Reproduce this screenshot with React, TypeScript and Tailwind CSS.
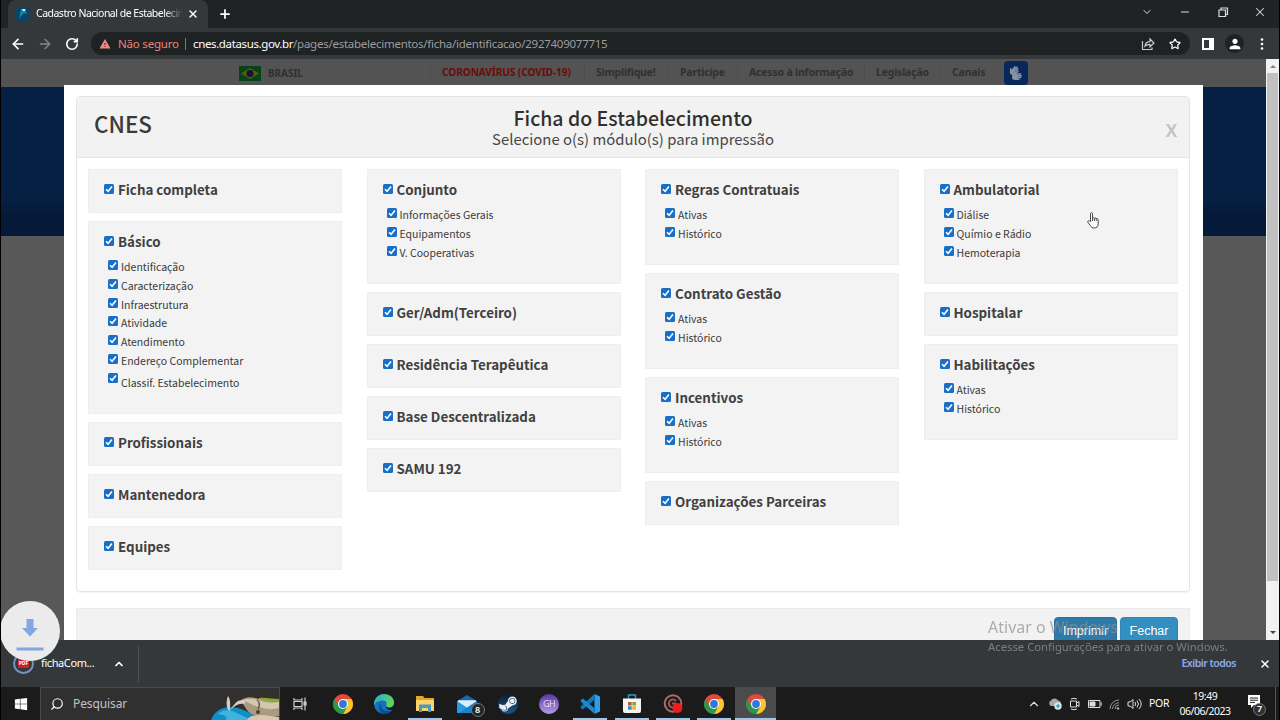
import { useState } from 'react';
import type { ReactNode } from 'react';
import { FaWindows, FaSteamSymbol, FaSignLanguage } from 'react-icons/fa';
import { MdWarning, MdPerson } from 'react-icons/md';
import {
  ArrowLeft,
  ArrowRight,
  ChevronDown,
  ChevronUp,
  Minus,
  Plus,
  RotateCw,
  Search,
  Star,
  X,
} from 'lucide-react';

type Module = {
  title: string;
  items?: string[];
  height: string;
};

const columns: Module[][] = [
  [
    { title: 'Ficha completa', height: 'h-11' },
    {
      title: 'Básico',
      height: 'h-[193px]',
      items: [
        'Identificação',
        'Caracterização',
        'Infraestrutura',
        'Atividade',
        'Atendimento',
        'Endereço Complementar',
        'Classif. Estabelecimento',
      ],
    },
    { title: 'Profissionais', height: 'h-11' },
    { title: 'Mantenedora', height: 'h-11' },
    { title: 'Equipes', height: 'h-11' },
  ],
  [
    {
      title: 'Conjunto',
      height: 'h-[115px]',
      items: ['Informações Gerais', 'Equipamentos', 'V. Cooperativas'],
    },
    { title: 'Ger/Adm(Terceiro)', height: 'h-11' },
    { title: 'Residência Terapêutica', height: 'h-11' },
    { title: 'Base Descentralizada', height: 'h-11' },
    { title: 'SAMU 192', height: 'h-11' },
  ],
  [
    { title: 'Regras Contratuais', height: 'h-24', items: ['Ativas', 'Histórico'] },
    { title: 'Contrato Gestão', height: 'h-24', items: ['Ativas', 'Histórico'] },
    { title: 'Incentivos', height: 'h-24', items: ['Ativas', 'Histórico'] },
    { title: 'Organizações Parceiras', height: 'h-11' },
  ],
  [
    {
      title: 'Ambulatorial',
      height: 'h-[115px]',
      items: ['Diálise', 'Químio e Rádio', 'Hemoterapia'],
    },
    { title: 'Hospitalar', height: 'h-11' },
    { title: 'Habilitações', height: 'h-24', items: ['Ativas', 'Histórico'] },
  ],
];

const Checkbox = () => {
  const [checked, setChecked] = useState(true);

  return (
    <button
      type="button"
      onClick={() => setChecked(!checked)}
      className="flex h-2.5 w-2.5 shrink-0 items-center justify-center rounded-[1.5px] bg-[#176fc8]"
    >
      {checked && (
        <svg viewBox="0 0 10 10" className="h-2.5 w-2.5" fill="none" stroke="#fff" strokeWidth="1.6">
          <path d="M2 5.2 4.1 7.3 8 2.6" />
        </svg>
      )}
    </button>
  );
};

const ModuleCard = ({ title, items, height }: Module) => (
  <div className={`${height} shrink-0 border border-[#eeeeee] bg-[#f3f3f3] pl-[15px] pt-[10px]`}>
    <div className="flex h-[18px] items-center gap-1">
      <Checkbox />
      <span className="mt-0.5 whitespace-nowrap text-[13.35px] font-bold leading-[18px] text-[#404040]">
        {title}
      </span>
    </div>
    {items && (
      <ul className="mt-[6px] pl-1">
        {items.map((item) => (
          <li key={item} className="flex h-[18.8px] items-start gap-[3px] pt-[4px]">
            <Checkbox />
            <span
              className={`whitespace-nowrap text-[10.5px] leading-4 text-[#3a3a3a] ${
                item.startsWith('Classif') ? 'pt-0.5' : '-mt-px'
              }`}
            >
              {item}
            </span>
          </li>
        ))}
      </ul>
    )}
  </div>
);

const TabBar = () => (
  <div className="flex h-7 items-end bg-[#202324] text-white">
    <div className="ml-[7px] flex h-7 w-[200px] items-center rounded-t-lg bg-[#35383b] pl-2">
      <svg viewBox="0 0 14 14" className="h-3.5 w-3.5 shrink-0">
        <rect width="14" height="14" rx="2" fill="#0a4563" />
        <path d="M5 2h5v3l1 2-3-1-3 3-2 3 1-5z" fill="#1387ad" />
        <path d="M6 2h3v2H7z" fill="#d8eef2" />
      </svg>
      <span className="ml-1.5 w-[147px] overflow-hidden whitespace-nowrap text-[10.5px] tracking-[-0.5px] [mask-image:linear-gradient(to_right,#000_87%,transparent)]">
        Cadastro Nacional de Estabelecim
      </span>
      <X className="ml-1 h-3 w-3" strokeWidth={2.8} />
    </div>
    <Plus className="mb-[7px] ml-[10px] h-3.5 w-3.5" strokeWidth={3} />
    <div className="mb-[9px] ml-auto mr-3 flex items-center gap-[26px] text-[#ddd]">
      <ChevronDown className="h-3 w-3" strokeWidth={2} />
      <Minus className="h-3 w-3" strokeWidth={2} />
      <svg viewBox="0 0 12 12" className="h-3 w-3" fill="none" stroke="#ddd" strokeWidth="1.2">
        <path d="M2 4h6.500v6.500H2zM4 4V2h6.500v6.500h-2" />
      </svg>
      <X className="-ml-0.5 h-3.5 w-3.5" strokeWidth={1.8} />
    </div>
  </div>
);

const Toolbar = () => (
  <div className="flex h-[31px] items-center bg-[#35383b] pl-[9px] pr-[9px] text-white">
    <ArrowLeft className="h-4 w-4" strokeWidth={2.4} />
    <ArrowRight className="ml-[11px] h-4 w-4 text-[#85888a]" strokeWidth={2} />
    <RotateCw className="ml-3 h-3.5 w-3.5" strokeWidth={2.8} />
    <div className="ml-3 flex h-[23px] w-[1099px] items-center rounded-full bg-[#1f2223] pl-2 pr-2">
      <MdWarning className="h-3 w-3 text-[#f08a80]" />
      <span className="ml-[7px] w-[60px] whitespace-nowrap text-[11.500px] tracking-[-0.2px] text-[#ee8279]">
        Não seguro
      </span>
      <span className="ml-[7px] h-3 w-px bg-[#777]" />
      <span className="ml-[7px] whitespace-nowrap text-[11.500px] tracking-[-0.26px] text-[#9a9d9f]">
        <span className="tracking-[-0.37px] text-white">cnes.datasus.gov.br</span>
        /pages/estabelecimentos/ficha/identificacao/2927409077715
      </span>
      <svg
        viewBox="0 0 14 14"
        className="ml-auto h-3.5 w-3.5"
        fill="none"
        stroke="#c8cacb"
        strokeWidth="1.2"
      >
        <path d="M1.500 4v8.500h9.500v-2" />
        <path d="M4 9c.4-3 2.200-4.300 5-4.400V2l4 4-4 3.800V7.300C7 7.300 5.300 7.700 4 9z" />
      </svg>
      <Star className="ml-3.5 mr-px h-3 w-3" strokeWidth={2.4} />
    </div>
    <svg viewBox="0 0 12 12" className="ml-[12px] h-3 w-3">
      <path d="M0 0h12v12H0z" fill="#fff" />
      <path d="M2 2h5v8H2z" fill="#35383b" />
    </svg>
    <div className="ml-[11px] flex h-[19px] w-[19px] items-center justify-center rounded-full bg-[#1f2223]">
      <MdPerson className="h-4 w-4" />
    </div>
    <svg viewBox="0 0 4 14" className="ml-auto mr-[6px] h-3.5 w-1" fill="#fff">
      <circle cx="2" cy="2.500" r="1.300" />
      <circle cx="2" cy="7" r="1.300" />
      <circle cx="2" cy="11.500" r="1.300" />
    </svg>
  </div>
);

const GovLink = ({ className, children }: { className: string; children: ReactNode }) => (
  <div className="flex items-center">
    <span className="mr-[11px] h-4 w-px bg-[#4d4d4d]" />
    <span className={`mr-3 whitespace-nowrap ${className}`}>{children}</span>
  </div>
);

const SiteBackground = () => (
  <div className="h-full w-[1265px] bg-[#585858]">
    <div className="flex h-[28px] items-center bg-[#535353] pl-[238px] text-[10.500px] font-bold tracking-[-0.2px] text-[#303030]">
      <svg viewBox="0 0 22 15" className="h-[15px] w-[22px]">
        <path d="M0 0h22v15H0z" fill="#07421a" />
        <path d="M11 2 20 7.500 11 13 2 7.500z" fill="#5d5a0a" />
        <circle cx="11" cy="7.500" r="3.500" fill="#101638" />
      </svg>
      <span className="ml-[7px] w-[162px] text-[10px] tracking-[-0.05px]">BRASIL</span>
      <GovLink className="w-[130px] text-[10.200px] tracking-[-0.12px] text-[#6c0b0b]">
        CORONAVÍRUS (COVID-19)
      </GovLink>
      <GovLink className="w-[60px]">Simplifique!</GovLink>
      <GovLink className="w-[45px]">Participe</GovLink>
      <GovLink className="w-[103px]">Acesso à informação</GovLink>
      <GovLink className="w-[52px]">Legislação</GovLink>
      <GovLink className="w-[40px]">Canais</GovLink>
      <div className="flex h-6 w-6 items-center justify-center rounded bg-[#08275a]">
        <FaSignLanguage className="h-3.5 w-3.5 -scale-x-100 text-[#8794a5]" />
      </div>
    </div>
    <div className="h-[149px] bg-gradient-to-b from-[#062044] from-75% to-[#051a38] to-85%" />
  </div>
);

const PrintModal = () => (
  <div className="absolute left-[63px] top-[26px] h-[555px] w-[1139px] overflow-hidden bg-white px-3 pr-[13px] pt-[11px] font-['Noto_Sans_CJK_JP','Noto_Sans',sans-serif]">
    <div className="h-[496px] rounded-sm border border-[#e4e4e4] shadow-[0_1px_1px_rgba(0,0,0,0.05)]">
      <div className="flex h-[61px] border-b border-[#e6e6e6] bg-[#f2f2f2]">
        <h1 className="w-[57px] pl-[17px] pt-[12px] text-[22.400px] font-medium leading-[28px] text-[#3a3a3a]">
          CNES
        </h1>
        <div className="flex-1 pt-[9px] text-center">
          <h2 className="text-[19.500px] font-medium leading-[23px] text-[#2f2f2f]">
            Ficha do Estabelecimento
          </h2>
          <p className="pt-px text-[14.900px] leading-[18px] text-[#484848]">
            Selecione o(s) módulo(s) para impressão
          </p>
        </div>
        <button className="w-[57px] pr-3 pt-2 text-right font-['Open_Sans',sans-serif] text-[17px] font-bold text-[#c4c4c4]">
          X
        </button>
      </div>
      <div className="flex gap-[24.500px] px-[11px] pt-[11px]">
        {columns.map((modules) => (
          <div key={modules[0].title} className="flex w-[254px] shrink-0 flex-col gap-2">
            {modules.map((module) => (
              <ModuleCard key={module.title} {...module} />
            ))}
          </div>
        ))}
      </div>
    </div>
    <div className="mt-4 flex h-10 justify-end gap-[3px] border border-[#ebebeb] bg-[#f2f2f2] pr-[11px] pt-2 font-['Liberation_Sans',sans-serif] text-[12.500px] text-white">
      <button className="h-7 w-[63px] rounded-sm border border-[#2a6f99] bg-[#2e7aa8]">
        Imprimir
      </button>
      <button className="h-7 w-[58px] rounded-sm border border-[#2e86b5] bg-[#338fbf]">
        Fechar
      </button>
    </div>
  </div>
);

const Scrollbar = () => (
  <div className="absolute right-0 top-0 flex h-full w-[13px] flex-col items-center bg-[#f1f1f1]">
    <svg viewBox="0 0 13 14" className="h-3.5 w-[13px]">
      <path d="M4 9h6L7 6z" fill="#808080" />
    </svg>
    <div className="h-[508px] w-[11px] bg-[#c1c1c1]" />
    <svg viewBox="0 0 13 14" className="mt-auto h-3.5 w-[13px]">
      <path d="M4 5h6L7 8z" fill="#404040" />
    </svg>
  </div>
);

const HandCursor = () => (
  <svg
    viewBox="0 0 12 17"
    className="absolute left-[1086px] top-[153px] h-[17px] w-3"
    fill="#fff"
    stroke="#333"
    strokeWidth="0.9"
    strokeLinejoin="round"
  >
    <path d="M3.500 9.500V2c0-2 2-2 2 0v4.500c0-1.200 1.900-1.200 1.900.2 0-1 1.900-1 1.900.4 0-1 1.900-.8 1.900.6v4.300c0 2.500-1.700 4-3.900 4-2 0-3-.8-4-2.500L.9 10.300c-.7-1.200.7-2 1.500-1.200z" />
    <path d="M5.500 6.500V9M7.400 6.700V9M9.300 7.200V9" fill="none" />
  </svg>
);

const DownloadShelf = () => (
  <div className="flex h-[47px] items-center bg-[#35383b] text-white">
    <div className="flex h-9 w-[138px] items-center border-r border-[#505356] pl-3">
      <div className="flex h-[21px] w-[21px] items-center justify-center rounded-full border-2 border-[#7197bd]">
        <span className="bg-[#d0202d] px-px text-[5px] font-bold leading-[9px]">PDF</span>
      </div>
      <span className="ml-[7px] w-[54px] whitespace-nowrap text-[11px] tracking-[-0.4px]">
        fichaCom...
      </span>
      <ChevronUp className="ml-[18px] h-3 w-3" strokeWidth={3.5} />
    </div>
    <span className="ml-auto text-[10.5px] font-semibold tracking-[-0.5px] text-[#8ea9ee]">
      Exibir todos
    </span>
    <X className="ml-[23px] mr-2 h-3 w-3" strokeWidth={3} />
  </div>
);

const DownloadBubble = () => (
  <div className="absolute -left-px top-[601px] flex h-[60px] w-[60px] flex-col items-center rounded-full bg-[#ebebeb]">
    <svg viewBox="0 0 30 34" className="mt-[18px] h-[34px] w-[30px]" fill="#84a6e4">
      <path d="M11.500 0h7v9h4.500L15 17.500 7 9h4.500zM1.500 28.500h27v3h-27z" />
    </svg>
  </div>
);

const Watermark = () => (
  <div className="pointer-events-none absolute left-[987px] top-[617px] whitespace-nowrap text-[#8f8f8f]">
    <p className="text-[16px] leading-5 opacity-70">Ativar o Windows</p>
    <p className="mt-0.5 text-[11.300px] leading-4 opacity-80">
      Acesse Configurações para ativar o Windows.
    </p>
  </div>
);

const ChromeIcon = () => (
  <svg viewBox="0 0 20 20" className="h-5 w-5">
    <circle cx="10" cy="10" r="10" fill="#e2493a" />
    <path d="M10 5h8.660A10 10 0 0 1 10 20l4.330-7.500z" fill="#fbc52d" />
    <path d="M1.340 5A10 10 0 0 0 10 20l4.330-7.500H5.670z" fill="#259a4b" />
    <circle cx="10" cy="10" r="5" fill="#fff" />
    <circle cx="10" cy="10" r="3.900" fill="#3176dd" />
  </svg>
);

const EdgeIcon = () => (
  <svg viewBox="0 0 20 20" className="h-5 w-5">
    <defs>
      <linearGradient id="edgeTop" x1="0" y1="0" x2="1" y2="0.400">
        <stop offset="0" stopColor="#2aa9dc" />
        <stop offset="1" stopColor="#5cd65a" />
      </linearGradient>
    </defs>
    <circle cx="10" cy="10" r="10" fill="#1173bf" />
    <path d="M0 9.500C.8 3.500 5 0 10 0c6 0 10 4 10 8.500 0 3-2.200 5-5 5-2.500 0-3.500-1-3-2 1.500-2 .5-5-3-5C5 6.500 1 8 0 12z" fill="url(#edgeTop)" />
    <path d="M7.500 8.500C5.500 12 8 17 13 17c2.500 0 4-.6 5.500-1.600-1.500 2.800-4.500 4.600-8 4.600C5 19 3.500 13 7.500 8.500z" fill="#0b4d91" />
    <path d="M12 11.500c.5 1.700 2 2.300 3.500 2.200 1.700-.1 3.500-1 4.500-3v4.300l-1.500.8c-3 .8-7 0-6.500-4.300z" fill="#1b1b1c" />
  </svg>
);

const ExplorerIcon = () => (
  <svg viewBox="0 0 20 18" className="h-[18px] w-5">
    <path d="M1 1h7l1.500 2H19v13H1z" fill="#e3a52c" />
    <path d="M1 5h18v11H1z" fill="#fad466" />
    <path d="M4 9.500h12V17h-3v-4H7v4H4z" fill="#4a97c4" />
  </svg>
);

const MailIcon = () => (
  <div className="relative">
    <svg viewBox="0 0 20 18" className="h-[18px] w-5">
      <path d="M0 6 10 0l10 6v12H0z" fill="#1467a8" />
      <path d="M1 5.500h18v5L10 16l-9-5.500z" fill="#e3f2fb" />
      <path d="m0 6 10 6.500L20 6v12H0z" fill="#2a9be0" />
      <path d="M10 12.500 20 6v12H2z" fill="#1b82cb" />
      <path d="M1 5.500h18l-9 7z" fill="#d9eefa" />
    </svg>
    <span className="absolute -right-2 top-[8px] flex h-3.5 w-3.5 items-center justify-center rounded-full border border-[#777] bg-[#252525] text-[9px] font-semibold text-white">
      8
    </span>
  </div>
);

const VsCodeIcon = () => (
  <svg viewBox="0 0 20 20" className="h-5 w-5">
    <path d="M14.500 0 20 2.500v15L14.500 20z" fill="#2ba0ea" />
    <path d="M14.500 0v5.700L3 15.500.8 14 .7 12.600z" fill="#1178bd" />
    <path d="M14.500 20v-5.700L3 4.500.8 6 .7 7.400z" fill="#1c8ad3" />
  </svg>
);

const StoreIcon = () => (
  <svg viewBox="0 0 20 20" className="h-5 w-5">
    <path d="M6.500 5V1h7v4" fill="none" stroke="#2a9cc9" strokeWidth="1.400" />
    <path d="M1 4.500h18V17q0 2-2 2H3q-2 0-2-2z" fill="#f4f4f2" />
    <path d="M6 8h3.700v3.500H6z" fill="#cf5035" />
    <path d="M10.300 8H14v3.500h-3.700z" fill="#83aa35" />
    <path d="M6 12.200h3.700v3.500H6z" fill="#2f8fc5" />
    <path d="M10.300 12.200H14v3.500h-3.700z" fill="#e8b632" />
  </svg>
);

const RecorderIcon = () => (
  <svg viewBox="0 0 20 20" className="h-5 w-5" fill="none">
    <circle cx="10" cy="9.500" r="8.300" stroke="#b36a66" strokeWidth="2" />
    <path d="M13 7a4 4 0 1 0 0 5M9 9.500h4" stroke="#9c5854" strokeWidth="2" />
    <circle cx="14.500" cy="14" r="5" fill="#ee1c1c" />
  </svg>
);

const GitHubDesktopIcon = () => (
  <div className="flex h-5 w-5 items-center justify-center rounded-full bg-gradient-to-b from-[#5e35a8] to-[#b59be0] text-[9px] tracking-[-0.5px] text-[#e6dcf7]">
    GH
  </div>
);

const SteamIcon = () => (
  <div className="flex h-5 w-5 items-center justify-center rounded-full bg-gradient-to-b from-[#0d1c38] to-[#19578b]">
    <FaSteamSymbol className="h-5 w-5 text-[#e9eef2]" />
  </div>
);

const taskbarApps: { name: string; icon: ReactNode; state?: 'open' | 'active' }[] = [
  { name: 'chrome', icon: <ChromeIcon /> },
  { name: 'edge', icon: <EdgeIcon /> },
  { name: 'explorer', icon: <ExplorerIcon />, state: 'open' },
  { name: 'mail', icon: <MailIcon /> },
  { name: 'steam', icon: <SteamIcon /> },
  { name: 'github', icon: <GitHubDesktopIcon /> },
  { name: 'vscode', icon: <VsCodeIcon />, state: 'open' },
  { name: 'store', icon: <StoreIcon />, state: 'open' },
  { name: 'recorder', icon: <RecorderIcon />, state: 'open' },
  { name: 'chrome-2', icon: <ChromeIcon />, state: 'open' },
  { name: 'chrome-3', icon: <ChromeIcon />, state: 'active' },
];

// Bing's daily illustration at the end of the search box
const SearchArt = () => (
  <svg viewBox="0 0 68 31" className="ml-auto h-[31px] w-[68px]">
    <path d="M14 4h54v27H30z" fill="#33302b" />
    <path d="M48 9c6-1 14 1 20 1v6l-20-2z" fill="#82ae2c" />
    <path d="M30 11c6-4 12-3 18-1 8 2 14 3 20 3v14c-8 2-14 1-20 0-8 0-12-4-18-16z" fill="#a99a81" />
    <path d="M32 11c8-3 15 0 21 2 7 1 10 1 15 0v6c-12 3-21 0-36-8z" fill="#d3c8ae" />
    <path d="M0 31c3-8 10-13 19-13 9 0 17 4 25 9v4z" fill="#128ec5" />
    <path d="M7 25c5-5 12-4 17-2 5 3 10 4 16 8H14c4-2 1-5-7-6z" fill="#3fb2dd" />
    <path d="M36 31c2-4 8-5 14-5 7 0 12 2 18 2v3z" fill="#d9c6ae" />
    <path d="M18 22c-3-4-3-10-1-15 3 4 2 10 2 14 4-5 6-10 13-10 3 0 3 3 1 4-6-1-9 2-15 7z" fill="#d5cfc3" />
    <path d="M46 11c3 2 3 6 1 9" fill="none" stroke="#62594b" strokeWidth="1.500" />
    <circle cx="47" cy="23" r="2" fill="#4a3f35" />
  </svg>
);

const TrayIcons = () => (
  <div className="flex items-center text-[#ddd]">
    <ChevronUp className="h-3.5 w-3.5" strokeWidth={2} />
    <svg viewBox="0 0 14 12" className="ml-[7px] h-3 w-3.5">
      <path d="M3 8a3 3 0 0 1 0-5.500 4 4 0 0 1 7 0c3 0 4 4 1 5.500z" fill="#a9a9a9" />
      <circle cx="10" cy="8" r="3.700" fill="#d9edf5" />
      <path d="M10 5.800v4.400M7.800 8h4.400" stroke="#2b8db5" strokeWidth="1.200" />
    </svg>
    <svg viewBox="0 0 12 14" className="ml-[7px] h-3.5 w-3" fill="none" stroke="#ddd">
      <path d="M1.500 4h6v6h-6zM7.500 6l2.500-1.500v5L7.500 8M2 2q3-1.500 6 0M2 12q3 1.500 6 0" />
    </svg>
    <svg viewBox="0 0 14 8" className="ml-[7px] h-2 w-3.5" fill="none" stroke="#ddd">
      <path d="M.5.500h11.500v7H.500zM13.200 2.500v3" />
      <path d="M2 2h5v4H2z" fill="#ddd" />
    </svg>
    <svg viewBox="0 0 12 12" className="ml-1.5 h-3 w-3" fill="none" stroke="#999">
      <path d="M2 11A9 9 0 0 1 11 2M4.500 11A6.500 6.500 0 0 1 11 4.800M7 11a4 4 0 0 1 4-4" />
      <circle cx="10" cy="10.500" r=".8" stroke="#ddd" />
    </svg>
    <svg viewBox="0 0 15 12" className="ml-[7px] h-3 w-[15px]" fill="none" stroke="#ddd">
      <path d="M1 4h2l3-2.500v9L3 8H1zM8 4q1.500 2 0 4M10 2.500q3 3.500 0 7M12 1q4.500 5 0 10" />
    </svg>
  </div>
);

const Taskbar = () => (
  <div className="flex h-[33px] bg-[#1b1b1c] text-white">
    <div className="flex w-[39px] items-center justify-center">
      <FaWindows className="h-3.5 w-3.5" />
    </div>
    <div className="flex w-60 items-center border border-b-0 border-[#4a4a4a] bg-[#303031] pl-[9px]">
      <Search className="h-3.5 w-3.5 -scale-x-100" strokeWidth={2} />
      <span className="ml-[9px] text-[12px] tracking-[-0.1px] text-[#c2c2c2]">Pesquisar</span>
      <SearchArt />
    </div>
    <div className="flex w-[42px] items-center justify-center pr-[3px]">
      <svg viewBox="0 0 14 14" className="h-3.5 w-3.5" fill="none" stroke="#ccc" strokeWidth="1.200">
        <path d="M1 1v2h8V1M1 13v-2h8v2M1 4.500h8v5H1zM12 .5v13" />
        <path d="M11 5h2v3h-2z" fill="#ccc" />
      </svg>
    </div>
    <div className="flex">
      {taskbarApps.map(({ name, icon, state }) => (
        <div
          key={name}
          className={`relative flex w-[41.300px] items-center justify-center ${
            state === 'active' ? 'bg-[#4b4b4c]' : ''
          }`}
        >
          {icon}
          {state && (
            <span
              className={`absolute bottom-0 h-0.5 bg-[#a0c6e8] ${
                state === 'active' ? 'w-full' : 'w-[34px]'
              }`}
            />
          )}
        </div>
      ))}
    </div>
    <div className="ml-auto flex items-center">
      <TrayIcons />
      <span className="ml-[7px] w-[19px] text-[10.5px] tracking-[-0.3px]">POR</span>
      <div className="ml-2.5 w-[54px] text-center text-[10.5px] leading-[15px] tracking-[-0.500px]">
        <p>19:49</p>
        <p>06/06/2023</p>
      </div>
      <div className="relative mb-0.5 ml-[15px] mr-[6px] h-[16px] w-[22px]">
        <svg viewBox="0 0 14 13" className="h-[13px] w-3.5">
          <path d="M1 0h12v10H7l-3 3v-3H1z" fill="#fff" />
          <path d="M3 3h8M3 5.200h8M3 7.400h5" stroke="#222" />
        </svg>
        <span className="absolute bottom-[-5px] right-[3px] flex h-[13px] w-[13px] items-center justify-center rounded-full border border-[#777] bg-[#303030] text-[9px] font-semibold">
          7
        </span>
      </div>
      <span className="h-full w-px bg-[#555]" />
      <span className="w-[3px]" />
    </div>
  </div>
);

const App = () => (
  <main className="relative h-[720px] w-[1280px] overflow-hidden border-x border-black bg-black font-['Noto_Sans',sans-serif]">
    <TabBar />
    <Toolbar />
    <section className="relative h-[581px] overflow-hidden">
      <SiteBackground />
      <PrintModal />
      <HandCursor />
      <Scrollbar />
    </section>
    <DownloadShelf />
    <Taskbar />
    <DownloadBubble />
    <Watermark />
  </main>
);

export default App;
